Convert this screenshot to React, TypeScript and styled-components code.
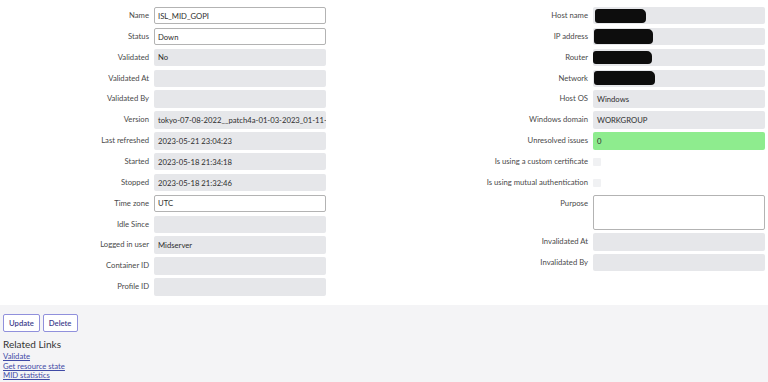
import styled, { createGlobalStyle } from 'styled-components';

const Global = createGlobalStyle`
  html, body {
    margin: 0;
    padding: 0;
    background: #ffffff;
    font-family: 'Lato', 'Liberation Sans', sans-serif;
  }
`;

const Page = styled.div`
  width: 768px;
  height: 382px;
  display: flex;
  flex-direction: column;
  overflow: hidden;
`;

const FormArea = styled.div`
  height: 305px;
  display: flex;
  padding-top: 7px;
  box-sizing: border-box;
  background: #ffffff;
`;

const Column = styled.div<{ $labelWidth: number }>`
  width: 384px;
  display: grid;
  grid-template-columns: ${(p) => p.$labelWidth}px 172px;
  column-gap: 5px;
  row-gap: 3.47px;
  align-content: start;
`;

const Label = styled.div<{ $top?: boolean }>`
  font-size: 7.7px;
  color: #4a4a4a;
  text-align: right;
  height: 17.4px;
  line-height: 17.4px;
  white-space: nowrap;
  align-self: ${(p) => (p.$top ? 'start' : 'center')};
`;

const Field = styled.div<{ $editable?: boolean; $green?: boolean; $tall?: boolean }>`
  height: ${(p) => (p.$tall ? '35px' : '17.4px')};
  box-sizing: border-box;
  border-radius: 2px;
  padding: 0 2px 0 4px;
  font-size: 7.7px;
  color: #2e2e2e;
  display: flex;
  align-items: center;
  white-space: nowrap;
  overflow: hidden;
  background: ${(p) => (p.$editable ? '#ffffff' : p.$green ? '#8eec8e' : '#e6e7ea')};
  border: ${(p) => (p.$editable ? '1px solid #b3b3b3' : 'none')};
  padding-left: ${(p) => (p.$editable ? '3px' : '4px')};
`;

const Redact = styled.span<{ $w: number; $h: number; $x: number }>`
  display: inline-block;
  width: ${(p) => p.$w}px;
  height: ${(p) => p.$h}px;
  margin-left: ${(p) => p.$x}px;
  background: #0d0d0d;
  border-radius: 3px 5px 4px 3px;
`;

const CheckCell = styled.div`
  height: 17.4px;
  display: flex;
  align-items: center;
`;

const Check = styled.span`
  width: 8px;
  height: 8px;
  border-radius: 1px;
  background: #f0f1f3;
`;

const Footer = styled.div`
  flex: 1;
  background: #f4f4f6;
  padding: 9px 3px 0;
`;

const Buttons = styled.div`
  display: flex;
  gap: 2.6px;
`;

const Button = styled.button<{ $w: number }>`
  width: ${(p) => p.$w}px;
  height: 18px;
  padding: 0;
  background: #ffffff;
  border: 1px solid #9090dc;
  border-radius: 2px;
  color: #3d3d8c;
  font-family: 'Lato', 'Liberation Sans', sans-serif;
  font-size: 7.7px;
  font-weight: 600;
`;

const Heading = styled.div`
  margin-top: 6px;
  font-size: 10px;
  color: #333333;
  line-height: 13px;
`;

const LinkList = styled.div`
  margin-top: 1px;
  display: flex;
  flex-direction: column;
`;

const Link = styled.a`
  font-size: 7.7px;
  line-height: 9.7px;
  color: #3f4aa6;
  text-decoration: underline;
`;

type Row =
  | { label: string; value?: string; editable?: boolean; green?: boolean; tall?: boolean; redact?: [number, number, number] }
  | { label: string; check: true };

const left: Row[] = [
  { label: 'Name', value: 'ISL_MID_GOPI', editable: true },
  { label: 'Status', value: 'Down', editable: true },
  { label: 'Validated', value: 'No' },
  { label: 'Validated At' },
  { label: 'Validated By' },
  { label: 'Version', value: 'tokyo-07-08-2022__patch4a-01-03-2023_01-11-' },
  { label: 'Last refreshed', value: '2023-05-21 23:04:23' },
  { label: 'Started', value: '2023-05-18 21:34:18' },
  { label: 'Stopped', value: '2023-05-18 21:32:46' },
  { label: 'Time zone', value: 'UTC', editable: true },
  { label: 'Idle Since' },
  { label: 'Logged in user', value: 'Midserver' },
  { label: 'Container ID' },
  { label: 'Profile ID' },
];

const right: Row[] = [
  { label: 'Host name', redact: [51, 14, -2] },
  { label: 'IP address', redact: [59, 15, -3] },
  { label: 'Router', redact: [59, 13, -4] },
  { label: 'Network', redact: [61, 14, -3] },
  { label: 'Host OS', value: 'Windows' },
  { label: 'Windows domain', value: 'WORKGROUP' },
  { label: 'Unresolved issues', value: '0', green: true },
  { label: 'Is using a custom certificate', check: true },
  { label: 'Is using mutual authentication', check: true },
  { label: 'Purpose', editable: true, tall: true },
  { label: 'Invalidated At' },
  { label: 'Invalidated By' },
];

function Rows({ rows }: { rows: Row[] }) {
  return (
    <>
      {rows.map((r) =>
        'check' in r ? (
          [
            <Label key={r.label + 'l'}>{r.label}</Label>,
            <CheckCell key={r.label + 'c'}>
              <Check />
            </CheckCell>,
          ]
        ) : (
          [
            <Label key={r.label + 'l'} $top={r.tall}>
              {r.label}
            </Label>,
            <Field key={r.label + 'f'} $editable={r.editable} $green={r.green} $tall={r.tall}>
              {r.redact && <Redact $w={r.redact[0]} $h={r.redact[1]} $x={r.redact[2]} />}
              {r.value}
            </Field>,
          ]
        )
      )}
    </>
  );
}

export default function App() {
  return (
    <Page>
      <Global />
      <FormArea>
        <Column $labelWidth={149}>
          <Rows rows={left} />
        </Column>
        <Column $labelWidth={204}>
          <Rows rows={right} />
        </Column>
      </FormArea>
      <Footer>
        <Buttons>
          <Button $w={37}>Update</Button>
          <Button $w={35}>Delete</Button>
        </Buttons>
        <Heading>Related Links</Heading>
        <LinkList>
          <Link href="#">Validate</Link>
          <Link href="#">Get resource state</Link>
          <Link href="#">MID statistics</Link>
        </LinkList>
      </Footer>
    </Page>
  );
}
